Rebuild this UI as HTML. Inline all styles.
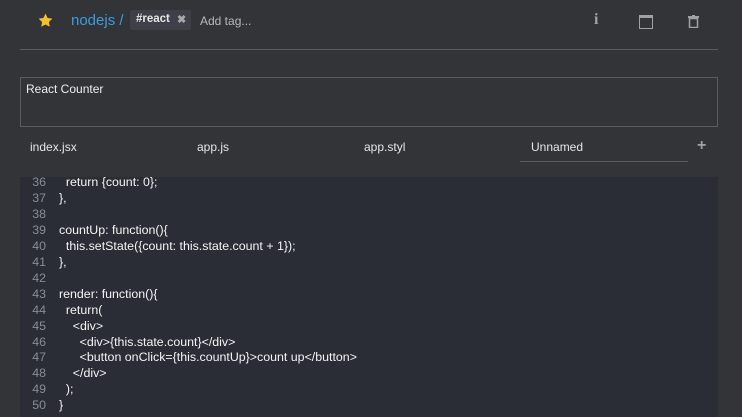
<!DOCTYPE html>
<html><head><style>
body{margin:0;width:742px;height:410px;background:#333438;font-family:"Liberation Sans",sans-serif;color:#e6e6e6;overflow:hidden;position:relative}
.a{position:absolute;white-space:pre}
.code{position:absolute;left:20px;top:177px;width:698px;height:240px;background:#2b2d36}
.ln{position:absolute;left:0;width:26px;text-align:right;color:#8a8c94;font-size:12.4px;line-height:15.95px}
.cl{position:absolute;left:39px;font-size:12.4px;color:#f4f4f4;white-space:pre;line-height:15.95px}
</style></head><body>
<svg class="a" style="left:38px;top:13px" width="15" height="15" viewBox="0 0 24 24"><path d="M12 1l3.4 7 7.6 1-5.5 5.3 1.3 7.7L12 18.3 5.2 22l1.3-7.7L1 9l7.6-1z" fill="#f5c02b"/></svg>
<div class="a" style="left:71px;top:12px;font-size:15px;color:#3e9be0">nodejs /</div>
<div class="a" style="left:130px;top:10px;width:61px;height:20px;background:#3d4049;border-radius:2px"></div>
<div class="a" style="left:136px;top:13px;font-size:11.5px;font-weight:bold;color:#e6e6e6">#react</div>
<div class="a" style="left:177px;top:13px;font-size:11px;font-weight:bold;color:#a8a9ad">✖</div>
<div class="a" style="left:200px;top:14px;font-size:12px;color:#b8b9bc">Add tag...</div>
<div class="a" style="left:594px;top:11px;font-size:16px;font-weight:bold;color:#a0a1a5;font-family:'Liberation Serif',serif">i</div>
<div class="a" style="left:639px;top:15px;width:12px;height:10px;border:1.5px solid #a0a1a5;border-top-width:3px"></div>
<svg class="a" style="left:688px;top:15px" width="11" height="13" viewBox="0 0 11 13"><rect x="0" y="1" width="11" height="2" fill="#a0a1a5"/><rect x="4" y="0" width="3" height="2" fill="#a0a1a5"/><rect x="1.5" y="3.5" width="8" height="9" fill="none" stroke="#a0a1a5" stroke-width="1.5"/></svg>
<div class="a" style="left:20px;top:49px;width:698px;height:1px;background:#5a5c63"></div>
<div class="a" style="left:20px;top:77px;width:696px;height:48px;border:1px solid #5a5c63"></div>
<div class="a" style="left:26px;top:82px;font-size:12px;color:#eee">React Counter</div>
<div class="a" style="left:30px;top:140px;font-size:12px">index.jsx</div>
<div class="a" style="left:197px;top:140px;font-size:12px">app.js</div>
<div class="a" style="left:364px;top:140px;font-size:12px">app.styl</div>
<div class="a" style="left:531px;top:140px;font-size:12px">Unnamed</div>
<div class="a" style="left:520px;top:161px;width:168px;height:1px;background:#5a5c63"></div>
<div class="a" style="left:697px;top:137px;font-size:16px;font-weight:bold;color:#a0a1a5">+</div>
<div class="code">
<div class="ln" style="top:-2px">36<br>37<br>38<br>39<br>40<br>41<br>42<br>43<br>44<br>45<br>46<br>47<br>48<br>49<br>50</div>
<div class="cl" style="top:-2px">  return {count: 0};
},

countUp: function(){
  this.setState({count: this.state.count + 1});
},

render: function(){
  return(
    &lt;div&gt;
      &lt;div&gt;{this.state.count}&lt;/div&gt;
      &lt;button onClick={this.countUp}&gt;count up&lt;/button&gt;
    &lt;/div&gt;
  );
}</div>
</div>
</body></html>
